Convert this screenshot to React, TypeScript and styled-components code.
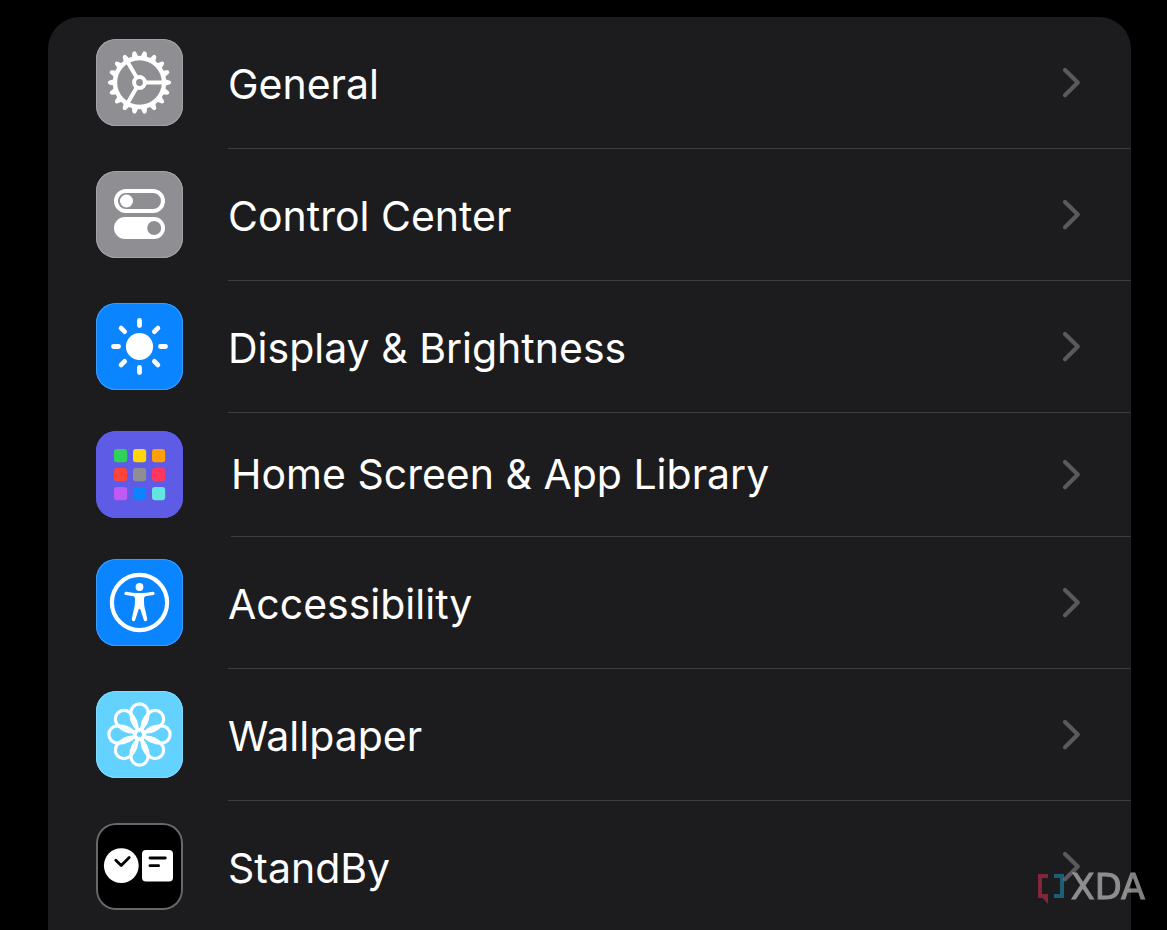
import React from "react";
import styled, { createGlobalStyle } from "styled-components";

const GlobalStyle = createGlobalStyle`
  html {
    scrollbar-width: none;
  }
  body {
    margin: 0;
    background: #000;
    font-family: Inter, "Liberation Sans", sans-serif;
  }
  *, *::before, *::after {
    box-sizing: border-box;
  }
`;

const Page = styled.main`
  min-height: 100vh;
  padding: 17px 36px 0 48px;
  background: #000;
`;

const Panel = styled.ul`
  margin: 0;
  padding: 0;
  list-style: none;
  background: #1c1c1e;
  border-radius: 32px 32px 0 0;
  overflow: hidden;
`;

const RowLink = styled.a<{ $compact?: boolean }>`
  display: flex;
  align-items: stretch;
  gap: ${(p) => (p.$compact ? 48 : 45)}px;
  height: ${(p) => (p.$compact ? 124 : 132)}px;
  padding-left: 48px;
  color: #fff;
  text-decoration: none;
`;

const Tile = styled.span<{ $color: string; $edge: string; $edgeWidth?: number }>`
  flex: none;
  align-self: center;
  width: 87px;
  height: 87px;
  margin-bottom: 1px;
  border-radius: 20px;
  background: ${(p) => p.$color};
  box-shadow: inset 0 0 0 ${(p) => p.$edgeWidth ?? 1}px ${(p) => p.$edge};

  svg {
    display: block;
  }
`;

const RowBody = styled.span`
  flex: 1;
  min-width: 0;
  display: flex;
  align-items: center;
  justify-content: space-between;
  padding-right: 49px;
  border-bottom: 1px solid #3d3d41;
`;

const Label = styled.span<{ $compact?: boolean }>`
  padding: ${(p) => (p.$compact ? "0 0 2px" : "2px 0 0")};
  font-size: 41px;
  line-height: 52px;
  white-space: nowrap;
`;

const Watermark = styled.div`
  position: fixed;
  right: 22px;
  bottom: 22px;
  display: flex;
  align-items: flex-start;
  gap: 6px;
  height: 36px;
  color: #fff;
  opacity: 0.5;
  pointer-events: none;
`;

const WatermarkText = styled.span`
  font-family: "DejaVu Sans", sans-serif;
  font-size: 35px;
  line-height: 30px;
  -webkit-text-stroke: 1px currentColor;
`;

const range = (n: number) => Array.from({ length: n }, (_, i) => i);

function Glyph({ children }: { children: React.ReactNode }) {
  return (
    <svg width="87" height="87" viewBox="0 0 87 87" fill="none" aria-hidden="true">
      {children}
    </svg>
  );
}

function GearGlyph() {
  return (
    <Glyph>
      <g transform="translate(43.5 43.5)">
        {range(18).map((i) => (
          <path
            key={i}
            d="M25.5 -3.3 L30 -2 Q31.6 -1.5 31.6 0 Q31.6 1.5 30 2 L25.5 3.3 Z"
            fill="#fff"
            transform={`rotate(${i * 20})`}
          />
        ))}
        <circle r="24.5" stroke="#fff" strokeWidth="4.4" />
        <circle r="5.4" stroke="#fff" strokeWidth="4" />
        {range(3).map((i) => (
          <path key={i} d="M6.5 0 H24" stroke="#fff" strokeWidth="4" transform={`rotate(${i * 120})`} />
        ))}
      </g>
    </Glyph>
  );
}

function TogglesGlyph() {
  return (
    <Glyph>
      <rect x="20" y="20" width="47" height="20" rx="10" stroke="#fff" strokeWidth="4" />
      <circle cx="30.5" cy="30" r="6.5" fill="#fff" />
      <rect x="18" y="46" width="51" height="22" rx="11" fill="#fff" />
      <circle cx="58.2" cy="57" r="7" fill="#8e8e93" />
    </Glyph>
  );
}

function SunGlyph() {
  return (
    <Glyph>
      <g transform="translate(43.5 43.5)">
        <circle r="13.6" fill="#fff" />
        {range(8).map((i) => (
          <path
            key={i}
            d="M21 0 H26"
            stroke="#fff"
            strokeWidth="4.8"
            strokeLinecap="round"
            transform={`rotate(${i * 45})`}
          />
        ))}
      </g>
    </Glyph>
  );
}

const appColors = [
  "#30d158", "#ffd60a", "#ff9f0a",
  "#ff453a", "#8e8e93", "#ff375f",
  "#bf5af2", "#0a84ff", "#63e6e2",
];

function AppGridGlyph() {
  return (
    <Glyph>
      {appColors.map((c, i) => (
        <rect
          key={c}
          x={18 + (i % 3) * 19}
          y={18 + Math.floor(i / 3) * 19}
          width="13.2"
          height="13.2"
          rx="3"
          fill={c}
        />
      ))}
    </Glyph>
  );
}

function PersonGlyph() {
  return (
    <Glyph>
      <circle cx="43.5" cy="43.5" r="27.6" stroke="#fff" strokeWidth="4.2" />
      <circle cx="43.5" cy="28" r="3.9" fill="#fff" />
      <path
        d="M30.3 32.7 C34 33.4 39 34 43.5 34 C48 34 53 33.4 56.7 32.7 C59 32.5 59.3 35.6 57.2 36.1 L50.6 37.1 C48.6 37.4 48 38.2 48 40 C48 46 48.4 48 49.3 51 L51.2 59.8 C51.5 62.6 48.6 63.2 47.8 61 L44.4 50.6 C44 49.6 43 49.6 42.6 50.6 L39.2 61 C38.4 63.2 35.5 62.6 35.8 59.8 L37.7 51 C38.6 48 39 46 39 40 C39 38.2 38.4 37.4 36.4 37.1 L29.8 36.1 C27.7 35.6 28 32.5 30.3 32.7 Z"
        fill="#fff"
      />
    </Glyph>
  );
}

function FlowerGlyph() {
  return (
    <Glyph>
      <g transform="translate(43.5 43.5)">
        {range(8).map((i) => (
          <path
            key={i}
            d="M0 -4 C-8 -9.5 -8.6 -16.5 -8.6 -22 A8.6 8.6 0 0 1 8.6 -22 C8.6 -16.5 8 -9.5 0 -4 Z"
            stroke="#fff"
            strokeWidth="3.2"
            strokeLinejoin="round"
            transform={`rotate(${i * 45})`}
          />
        ))}
        <circle r="5" stroke="#fff" strokeWidth="3" />
      </g>
    </Glyph>
  );
}

function StandByGlyph() {
  return (
    <Glyph>
      <circle cx="25.3" cy="42.6" r="17.4" fill="#fff" />
      <path
        d="M19.8 37.2 L25.2 42.6 L33.2 34.6"
        stroke="#000"
        strokeWidth="2.8"
        strokeLinecap="round"
        strokeLinejoin="round"
      />
      <rect x="46" y="27" width="31" height="31.4" rx="4" fill="#fff" />
      <path d="M54 35 H69.3 M54 42.7 H62.6" stroke="#000" strokeWidth="2.8" strokeLinecap="round" />
    </Glyph>
  );
}

function Chevron() {
  return (
    <svg width="21" height="32" viewBox="0 0 21 32" fill="none" aria-hidden="true">
      <path
        d="M4 3 L16.8 15.6 L4 28.2"
        stroke="#5a5a5e"
        strokeWidth="4.2"
        strokeLinecap="round"
        strokeLinejoin="round"
      />
    </svg>
  );
}

interface Setting {
  label: string;
  color: string;
  edge: string;
  edgeWidth?: number;
  glyph: React.ReactNode;
  compact?: boolean;
}

const settings: Setting[] = [
  { label: "General", color: "#8e8e93", edge: "#a3a3a7", glyph: <GearGlyph /> },
  { label: "Control Center", color: "#8e8e93", edge: "#a3a3a7", glyph: <TogglesGlyph /> },
  { label: "Display & Brightness", color: "#0a84ff", edge: "#3c9bfb", glyph: <SunGlyph /> },
  {
    label: "Home Screen & App Library",
    color: "#5e5ce6",
    edge: "#5e5ce6",
    glyph: <AppGridGlyph />,
    compact: true,
  },
  { label: "Accessibility", color: "#0a84ff", edge: "#3c9bfb", glyph: <PersonGlyph /> },
  { label: "Wallpaper", color: "#64d2ff", edge: "#80daff", glyph: <FlowerGlyph /> },
  { label: "StandBy", color: "#000", edge: "#68686b", edgeWidth: 2, glyph: <StandByGlyph /> },
];

export default function App() {
  return (
    <Page>
      <GlobalStyle />
      <Panel>
        {settings.map((s) => (
          <li key={s.label}>
            <RowLink href="#" $compact={s.compact}>
              <Tile $color={s.color} $edge={s.edge} $edgeWidth={s.edgeWidth}>
                {s.glyph}
              </Tile>
              <RowBody>
                <Label $compact={s.compact}>{s.label}</Label>
                <Chevron />
              </RowBody>
            </RowLink>
          </li>
        ))}
      </Panel>
      <Watermark>
        <svg width="27" height="34" viewBox="0 0 27 34" aria-hidden="true">
          <path d="M0 2 H10 V6 H4 V22 H10 V32 L4.5 26 H0 Z" fill="#e8305a" />
          <path d="M16 2 H26 V26 H16 V22 H22 V6 H16 Z" fill="#1f9fd0" />
        </svg>
        <WatermarkText>XDA</WatermarkText>
      </Watermark>
    </Page>
  );
}
